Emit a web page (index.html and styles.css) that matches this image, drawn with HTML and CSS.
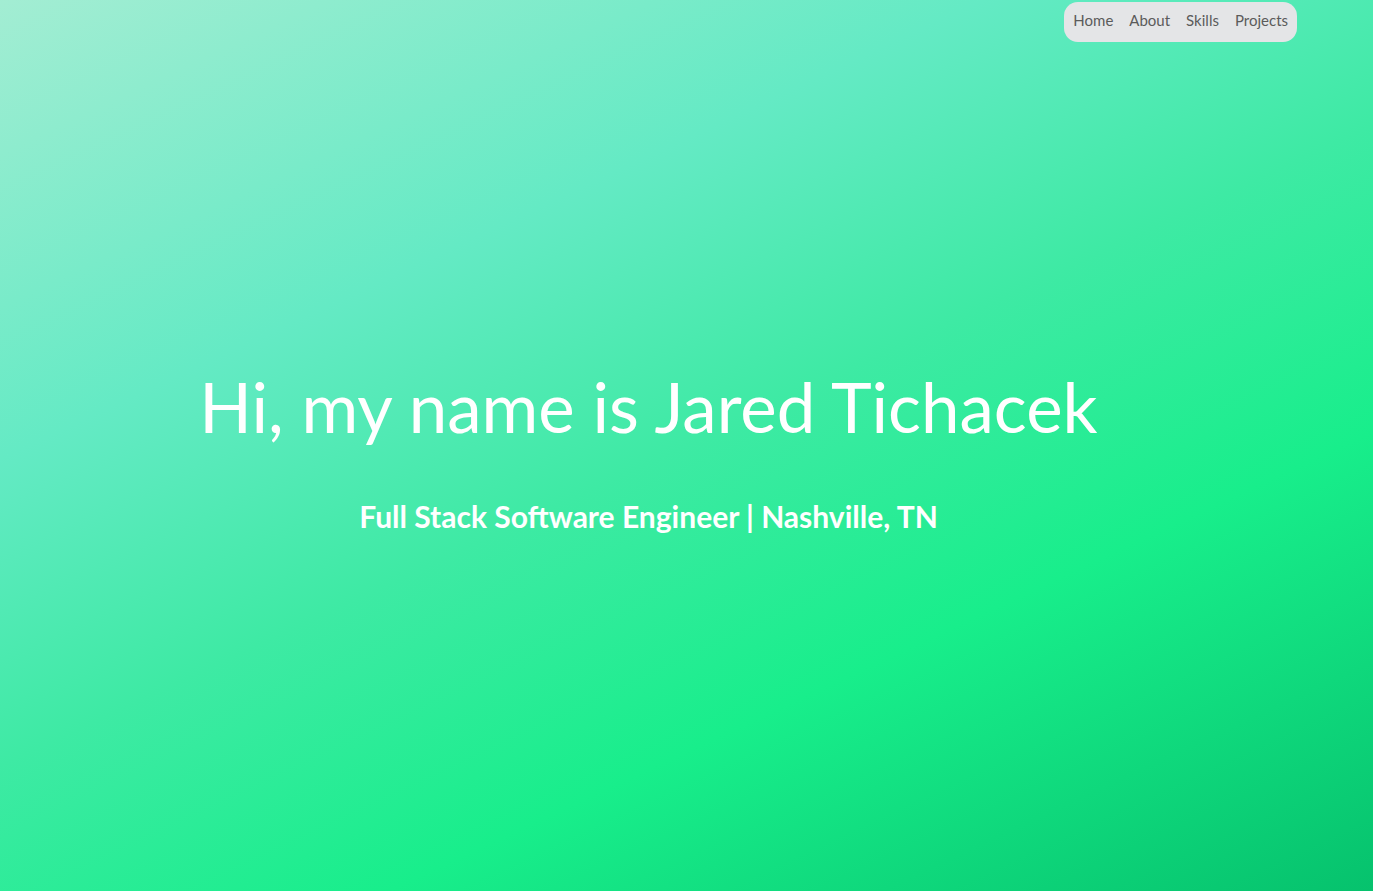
FILE: index.html
```html
<!DOCTYPE html>
<html lang="en">
<head>
<meta charset="utf-8">
<title>Jared Tichacek</title>
<link rel="stylesheet" href="styles.css">
</head>
<body>
<div class="page">
  <header class="topbar">
    <nav class="nav">
      <a href="#">Home</a>
      <a href="#">About</a>
      <a href="#">Skills</a>
      <a href="#">Projects</a>
    </nav>
  </header>
  <main class="hero">
    <h1 class="title">Hi, my name is Jared Tichacek</h1>
    <p class="subtitle">Full Stack Software Engineer | Nashville, TN</p>
  </main>
</div>
</body>
</html>
```
FILE: styles.css
```css
html, body {
  margin: 0;
  padding: 0;
  height: 100%;
}
body {
  font-family: "Lato", "Open Sans", sans-serif;
  background: linear-gradient(155deg, #a3edd3 0%, #64eac4 30%, #3eeaa4 50%, #18ee8b 70%, #06c26d 100%);
  overflow: hidden;
}
.page {
  height: 891px;
  display: flex;
  flex-direction: column;
  margin-right: 76px;
}
.topbar {
  display: flex;
  justify-content: flex-end;
  padding-top: 2px;
}
.nav {
  display: flex;
  align-items: center;
  gap: 16px;
  height: 36px;
  padding: 0 9px 4px 9px;
  background: #e4e5e7;
  border-radius: 14px;
}
.nav a {
  color: #5b5b5b;
  text-decoration: none;
  font-size: 15px;
}
.hero {
  display: flex;
  flex-direction: column;
  align-items: center;
  padding-top: 324px;
}
.title {
  margin: 0;
  color: #ffffff;
  font-weight: 400;
  font-size: 69px;
  line-height: 1.2;
}
.subtitle {
  margin: 49px 0 0;
  color: #ffffff;
  font-weight: 700;
  font-size: 30px;
}
```
